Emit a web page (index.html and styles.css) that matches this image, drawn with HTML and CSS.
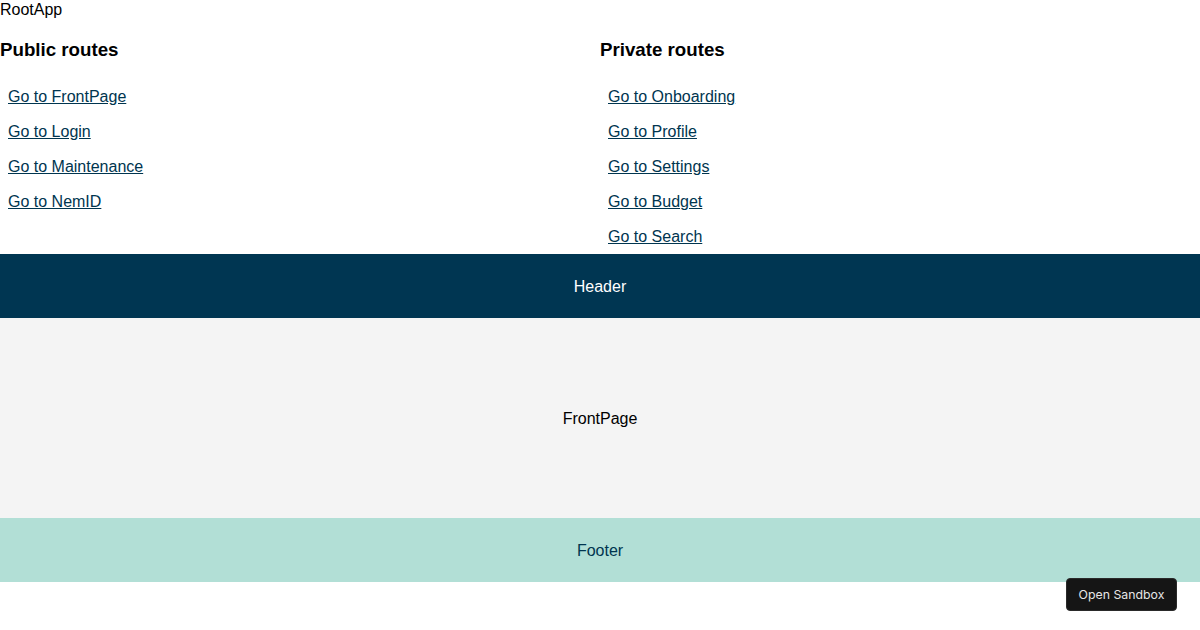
FILE: index.html
```html
<!DOCTYPE html>
<html>
<head>
<meta charset="utf-8">
<link rel="stylesheet" href="styles.css">
</head>
<body>
<div class="root-title">RootApp</div>
<div class="columns">
  <section class="col">
    <h3 class="col-title">Public routes</h3>
    <ul class="route-list">
      <li><a href="#">Go to FrontPage</a></li>
      <li><a href="#">Go to Login</a></li>
      <li><a href="#">Go to Maintenance</a></li>
      <li><a href="#">Go to NemID</a></li>
    </ul>
  </section>
  <section class="col">
    <h3 class="col-title">Private routes</h3>
    <ul class="route-list">
      <li><a href="#">Go to Onboarding</a></li>
      <li><a href="#">Go to Profile</a></li>
      <li><a href="#">Go to Settings</a></li>
      <li><a href="#">Go to Budget</a></li>
      <li><a href="#">Go to Search</a></li>
    </ul>
  </section>
</div>
<header class="app-header">Header</header>
<main class="app-main">FrontPage</main>
<footer class="app-footer">Footer</footer>
<button class="sandbox-btn">Open Sandbox</button>
</body>
</html>
```
FILE: styles.css
```css
html, body {
  margin: 0;
  padding: 0;
  background: #ffffff;
  font-family: "Liberation Sans", Arial, sans-serif;
  font-size: 16px;
  color: #000000;
}
.root-title {
  height: 18px;
  line-height: 20px;
}
.columns {
  display: grid;
  grid-template-columns: 600px 600px;
}
.col-title {
  margin: 21px 0 0;
  font-size: 18.72px;
  line-height: 22px;
  font-weight: bold;
}
.route-list {
  list-style: none;
  margin: 18px 0 0;
  padding: 0 0 0 8px;
}
.route-list li {
  height: 35px;
  line-height: 35px;
}
.route-list a {
  color: #00354f;
  text-decoration: underline;
}
.app-header {
  box-sizing: border-box;
  height: 64px;
  padding-top: 2px;
  background: #003652;
  color: #ffffff;
  display: flex;
  align-items: center;
  justify-content: center;
}
.app-main {
  box-sizing: border-box;
  height: 200px;
  padding-top: 2px;
  background: #f4f4f4;
  display: flex;
  align-items: center;
  justify-content: center;
}
.app-footer {
  box-sizing: border-box;
  height: 64px;
  padding-top: 2px;
  background: #b2dfd6;
  color: #00354f;
  display: flex;
  align-items: center;
  justify-content: center;
}
.sandbox-btn {
  position: fixed;
  right: 23px;
  bottom: 19px;
  width: 111px;
  height: 33px;
  padding: 0;
  background: #151515;
  color: #e6e6e6;
  border: 1px solid #2a2a2a;
  border-radius: 4px;
  font-family: "Inter", "Liberation Sans", sans-serif;
  font-size: 12.3px;
}
```
